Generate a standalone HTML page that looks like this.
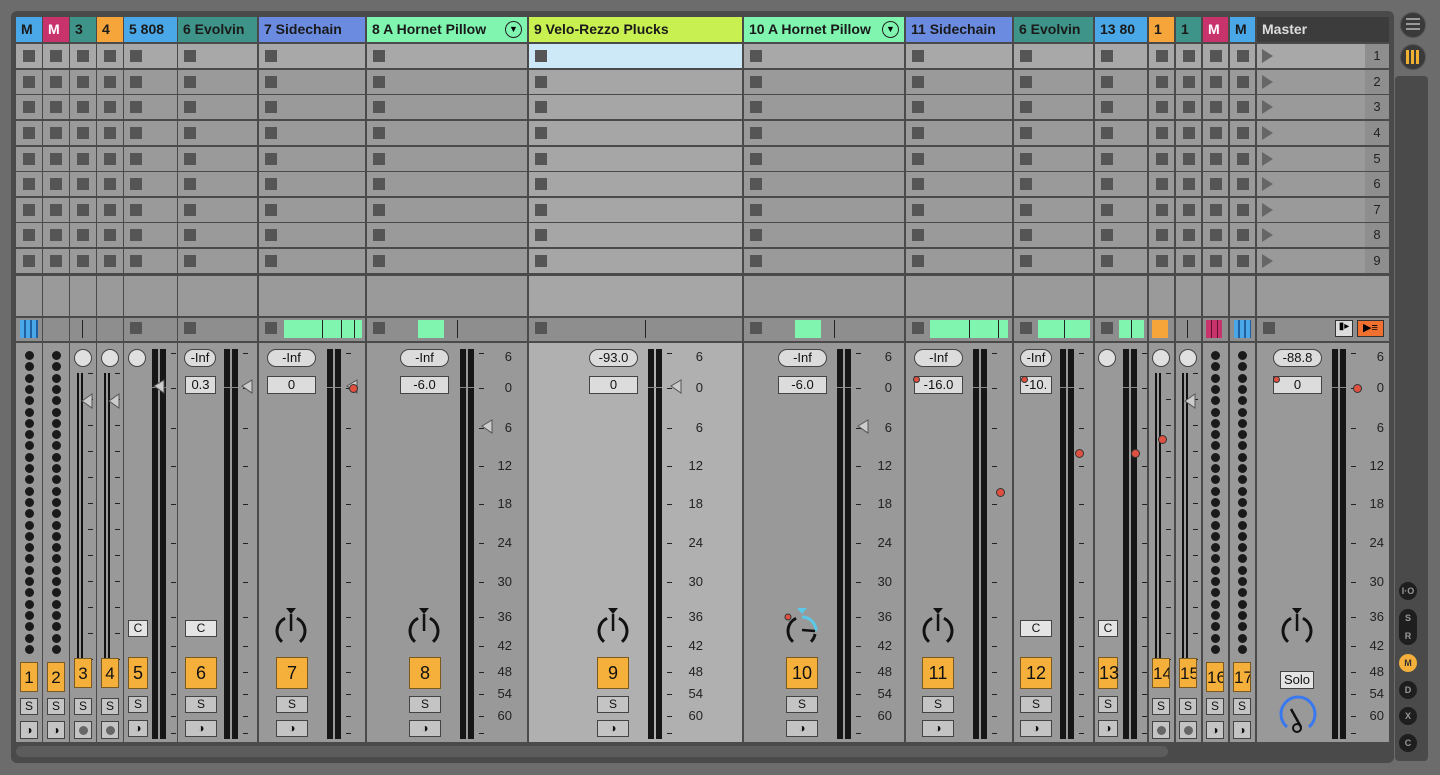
<!DOCTYPE html>
<html><head><meta charset="utf-8"><style>
*{box-sizing:border-box;margin:0;padding:0}
body{width:1440px;height:775px;background:#6c6c6c;position:relative;overflow:hidden;font-family:"Liberation Sans",sans-serif;}
.a{position:absolute}
.hd{position:absolute;top:17px;height:25px;font-size:14px;line-height:25px;padding-left:5px;white-space:nowrap;overflow:hidden;color:#1a1a1a;font-weight:bold}
.sq{position:absolute;width:12px;height:12px;background:#555}
.pill{position:absolute;height:18px;border:1px solid #444;border-radius:9px;background:#dcdcdc;font-size:13px;line-height:16px;text-align:center;color:#111}
.box{position:absolute;height:18px;border:1px solid #444;background:#dcdcdc;font-size:13px;line-height:16px;text-align:center;color:#111}
.num{position:absolute;background:#f5b03c;border:1px solid #7a5a20;font-size:18px;text-align:center;color:#111}
.btn{position:absolute;border:1px solid #444;background:#c4c4c4;font-size:12px;text-align:center;color:#111}
.mt{position:absolute;top:349px;height:390px;background:#161616}
.tk{position:absolute;width:5px;height:1px;background:#222}
.lb{position:absolute;font-size:13px;color:#222;width:24px;text-align:right}
.dot{position:absolute;width:9px;height:9px;border-radius:50%;background:#1a1a1a}
.cir{position:absolute;width:18px;height:18px;border-radius:50%;background:#e0e0e0;border:1px solid #444}
.rb{position:absolute;left:1399px;width:18px;height:18px;border-radius:50%;background:#1e1e1e;color:#999;font-size:9px;text-align:center;line-height:18px;font-weight:bold}
</style></head><body>
<div class="a" style="left:11px;top:11px;width:1383px;height:752px;background:#4a4a4a;border-radius:6px"></div>
<div class="a" style="left:1395px;top:76px;width:33px;height:685px;background:#4a4a4a;border-radius:4px"></div>
<div class="a" style="left:1400px;top:12px;width:26px;height:26px;border-radius:50%;background:#3a3a3a;border:1px solid #555"></div>
<div class="a" style="left:1406px;top:18px;width:14px;height:2px;background:#999;box-shadow:0 5px 0 #999,0 10px 0 #999"></div>
<div class="a" style="left:1400px;top:44px;width:26px;height:26px;border-radius:50%;background:#3a3a3a;border:1px solid #555"></div>
<div class="a" style="left:1406px;top:50px;width:3px;height:14px;background:#f0b030;box-shadow:5px 0 0 #f0b030,10px 0 0 #f0b030"></div>
<div class="rb" style="top:582px">I·O</div>
<div class="rb" style="top:609px;border-radius:9px 9px 0 0">S</div>
<div class="rb" style="top:627px;border-radius:0 0 9px 9px">R</div>
<div class="rb" style="top:654px;background:#f5b03c;color:#333">M</div>
<div class="rb" style="top:681px">D</div>
<div class="rb" style="top:707px">X</div>
<div class="rb" style="top:734px">C</div>
<div class="a" style="left:16px;top:746px;width:1152px;height:11px;border-radius:6px;background:#5c5c5c"></div>
<div id="root"></div>

<div class="hd" style="left:16px;width:26px;background:#4aa8e8">M</div>
<div class="hd" style="left:43px;width:26px;background:#c8336c;color:#fff">M</div>
<div class="hd" style="left:70px;width:26px;background:#3e9488">3</div>
<div class="hd" style="left:97px;width:26px;background:#f5a53a">4</div>
<div class="hd" style="left:124px;width:53px;background:#4aa8e8">5 808</div>
<div class="hd" style="left:178px;width:79px;background:#3e9488">6 Evolvin</div>
<div class="hd" style="left:259px;width:106px;background:#6b8be0">7 Sidechain</div>
<div class="hd" style="left:367px;width:160px;background:#7ff5b0">8 A Hornet Pillow</div>
<div class="hd" style="left:529px;width:213px;background:#c8f050">9 Velo-Rezzo Plucks</div>
<div class="hd" style="left:744px;width:160px;background:#7ff5b0">10 A Hornet Pillow</div>
<div class="hd" style="left:906px;width:106px;background:#6b8be0">11 Sidechain</div>
<div class="hd" style="left:1014px;width:79px;background:#3e9488">6 Evolvin</div>
<div class="hd" style="left:1095px;width:52px;background:#4aa8e8">13 80</div>
<div class="hd" style="left:1149px;width:25px;background:#f5a53a">1</div>
<div class="hd" style="left:1176px;width:25px;background:#3e9488">1</div>
<div class="hd" style="left:1203px;width:25px;background:#c8336c;color:#fff">M</div>
<div class="hd" style="left:1230px;width:25px;background:#4aa8e8">M</div>
<div class="hd" style="left:1257px;width:132px;background:#3c3c3c;color:#ddd">Master</div>
<div class="a" style="left:505px;top:21px;width:17px;height:17px;border:1.5px solid #222;border-radius:50%;font-size:9px;text-align:center;line-height:15px">▼</div>
<div class="a" style="left:882px;top:21px;width:17px;height:17px;border:1.5px solid #222;border-radius:50%;font-size:9px;text-align:center;line-height:15px">▼</div>

<script>
const C=[[16,26,'dots'],[43,26,'dots'],[70,26,'thin'],[97,26,'thin'],[124,53,'c5'],[178,79,'c6'],[259,106,'w7'],[367,160,'w8'],[529,213,'w9'],[744,160,'w10'],[906,106,'w11'],[1014,79,'c12'],[1095,52,'c13'],[1149,25,'thin'],[1176,25,'thin'],[1203,25,'dots'],[1230,25,'dots'],[1257,132,'m']];
let h='';
const rowsY=[44,70,95,121,147,172,198,223,249];
const ticks=[353,388,428,466,504,543,582,617,646,672,694,716,733];
C.forEach((c,i)=>{
 const [x,w,t]=c;const sel=t=='w9';
 rowsY.forEach((y,r)=>{
  let bg=r==0?'#a8a8a8':'#9a9a9a'; if(sel&&r==0)bg='#cde9f8'; if(sel&&r>0)bg='#a6a6a6';
  h+=`<div class="a" style="left:${x}px;top:${y}px;width:${w}px;height:24px;background:${bg}"></div>`;
  if(t=='m'){h+=`<div class="a" style="left:${x+5}px;top:${y+5}px;width:0;height:0;border-left:11px solid #666;border-top:7px solid transparent;border-bottom:7px solid transparent"></div><div class="a" style="left:${x+108}px;top:${y}px;width:24px;height:24px;background:#8e8e8e;font-size:13px;text-align:center;line-height:24px;color:#222">${r+1}</div>`;}
  else h+=`<div class="sq" style="left:${x+(w<30?7:6)}px;top:${y+6}px"></div>`;
 });
 h+=`<div class="a" style="left:${x}px;top:276px;width:${w}px;height:40px;background:${sel?'#a6a6a6':'#9a9a9a'}"></div>`;
 h+=`<div class="a" style="left:${x}px;top:318px;width:${w}px;height:23px;background:#8e8e8e"></div>`;
 h+=`<div class="a" style="left:${x}px;top:343px;width:${w}px;height:399px;background:${sel?'#b0b0b0':'#999'}"></div>`;
});
const st=[[130],[184],[265],[373],[535],[750],[912],[1020],[1101],[1263]];
st.forEach(s=>h+=`<div class="sq" style="left:${s[0]}px;top:322px"></div>`);
[[284,78],[418,26],[795,26],[930,78],[1038,52],[1119,25]].forEach(g=>h+=`<div class="a" style="left:${g[0]}px;top:320px;width:${g[1]}px;height:18px;background:#7ff5b0"></div>`);
[[322],[341],[354],[457],[645],[834],[969],[998],[1064],[1131],[1187],[1160]].forEach(v=>h+=`<div class="a" style="left:${v[0]}px;top:320px;width:1px;height:18px;background:#222"></div>`);
h+=`<div class="a" style="left:20px;top:320px;width:18px;height:18px;background:repeating-linear-gradient(90deg,#4aa8e8 0 4px,#2060a0 4px 6px)"></div>`;
h+=`<div class="a" style="left:1234px;top:320px;width:17px;height:18px;background:repeating-linear-gradient(90deg,#4aa8e8 0 4px,#2060a0 4px 6px)"></div>`;
h+=`<div class="a" style="left:1206px;top:320px;width:16px;height:18px;background:repeating-linear-gradient(90deg,#c8336c 0 5px,#601030 5px 6px)"></div>`;
h+=`<div class="a" style="left:1152px;top:320px;width:16px;height:18px;background:#f5a53a"></div><div class="a" style="left:82px;top:320px;width:1px;height:18px;background:#222"></div>`;
h+=`<div class="a" style="left:1335px;top:320px;width:18px;height:17px;border:1px solid #333;background:#ddd;font-size:10px;text-align:center">▮▸</div><div class="a" style="left:1357px;top:320px;width:27px;height:17px;border:1px solid #333;background:#f07030;font-size:11px;text-align:center;line-height:15px">▶≡</div>`;
function meter(x,scale,lbx){h+=`<div class="mt" style="left:${x}px;width:6px"></div><div class="mt" style="left:${x+8}px;width:6px"></div><div class="a" style="left:${x}px;top:387px;width:14px;height:1px;background:#888"></div>`;
 ticks.forEach(y=>h+=`<div class="tk" style="left:${x+19}px;top:${y}px"></div>`);
 if(scale){const L=[['6',357],['0',388],['6',428],['12',466],['18',504],['24',543],['30',582],['36',617],['42',646],['48',672],['54',694],['60',716]];L.forEach(l=>h+=`<div class="lb" style="left:${lbx}px;top:${l[1]-8}px">${l[0]}</div>`);}}
const KR='<path d="M25.9 11.3 A14 14 0 0 1 29 34.7" fill="none" stroke="#111" stroke-width="3"/>';
const KL='<path d="M14.1 11.3 A14 14 0 0 0 11 34.7" fill="none" stroke="#111" stroke-width="3"/>';
function knob(cx){h+=`<svg class="a" style="left:${cx-20}px;top:607px" width="40" height="42">${KL}${KR}<rect x="18.8" y="7" width="2.5" height="17" fill="#111"/><path d="M15 1 L25 1 L20 7Z" fill="#111"/></svg>`;}
function bottom(cx,n,wid){h+=`<div class="num" style="left:${cx-wid/2}px;top:657px;width:${wid}px;height:32px;line-height:30px">${n}</div><div class="btn" style="left:${cx-wid/2}px;top:696px;width:${wid}px;height:17px;line-height:15px">S</div><div class="btn" style="left:${cx-wid/2}px;top:720px;width:${wid}px;height:17px;line-height:15px">◑</div>`;}
[[29,1,'dots'],[56,2,'dots'],[83,3,'thin'],[110,4,'thin'],[1161,14,'thin'],[1188,15,'thin'],[1215,16,'dots'],[1242,17,'dots']].forEach(d=>{
 const [cx,n,t]=d;
 if(t=='dots'){for(let y=351;y<655;y+=11.3)h+=`<div class="dot" style="left:${cx-4}px;top:${y}px"></div>`;}
 else{h+=`<div class="cir" style="left:${cx-9}px;top:349px"></div><div class="a" style="left:${cx-6}px;top:373px;width:2px;height:290px;background:#111"></div><div class="a" style="left:${cx-2}px;top:373px;width:2px;height:290px;background:#111"></div>`;
  for(let y=373;y<660;y+=26)h+=`<div class="tk" style="left:${cx+5}px;top:${y}px"></div>`;}
 h+=`<div class="num" style="left:${cx-9}px;top:${t=='dots'?662:658}px;width:18px;height:30px;line-height:30px;font-size:17px;overflow:hidden">${n}</div><div class="btn" style="left:${cx-9}px;top:698px;width:18px;height:17px;line-height:15px">S</div><div class="btn" style="left:${cx-9}px;top:721px;width:18px;height:18px;line-height:16px">${t=='thin'?'<span style="display:inline-block;width:9px;height:9px;border-radius:50%;background:#666;vertical-align:middle"></span>':'◑'}</div>`;
});
h+=`<svg class="a" style="left:74px;top:392px" width="50" height="20"><path d="M18 2 L8 9 L18 16Z" fill="#ccc" stroke="#555"/><path d="M45 2 L35 9 L45 16Z" fill="#ccc" stroke="#555"/></svg>`;
h+=`<svg class="a" style="left:1177px;top:392px" width="20" height="20"><path d="M18 2 L8 9 L18 16Z" fill="#ccc" stroke="#555"/></svg>`;
h+=`<div class="cir" style="left:128px;top:349px"></div>`;meter(152,false);
h+=`<div class="btn" style="left:128px;top:620px;width:20px;height:17px;background:#e4e4e4;line-height:15px">C</div>`;bottom(138,5,20);
h+=`<div class="pill" style="left:184px;top:349px;width:32px">-Inf</div><div class="box" style="left:185px;top:376px;width:31px">0.3</div>`;meter(224,false);
h+=`<div class="btn" style="left:185px;top:620px;width:32px;height:17px;background:#e4e4e4;line-height:15px">C</div>`;bottom(201,6,32);
h+=`<div class="pill" style="left:267px;top:349px;width:49px">-Inf</div><div class="box" style="left:267px;top:376px;width:49px">0</div>`;meter(327,false);knob(291);bottom(292,7,32);
h+=`<div class="pill" style="left:400px;top:349px;width:49px">-Inf</div><div class="box" style="left:400px;top:376px;width:49px">-6.0</div>`;meter(460,true,488);knob(424);bottom(425,8,32);
h+=`<div class="pill" style="left:589px;top:349px;width:49px">-93.0</div><div class="box" style="left:589px;top:376px;width:49px">0</div>`;meter(648,true,679);knob(613);bottom(613,9,32);
h+=`<div class="pill" style="left:778px;top:349px;width:49px">-Inf</div><div class="box" style="left:778px;top:376px;width:49px">-6.0</div>`;meter(837,true,868);
h+=`<svg class="a" style="left:782px;top:607px" width="44" height="42">${KL}<path d="M20 10 A14 14 0 0 1 34 24" fill="none" stroke="#5cc8e8" stroke-width="3"/><path d="M33 27 A14 14 0 0 1 29 34.7" fill="none" stroke="#111" stroke-width="3"/><line x1="20" y1="23" x2="33" y2="24" stroke="#111" stroke-width="2.5"/><path d="M15 1 L25 1 L20 7Z" fill="#5cc8e8"/><circle cx="6" cy="10" r="3" fill="#e05040" stroke="#333"/></svg>`;bottom(802,10,32);
h+=`<div class="pill" style="left:914px;top:349px;width:49px">-Inf</div><div class="box" style="left:914px;top:376px;width:49px">-16.0</div>`;meter(973,false);knob(938);bottom(938,11,32);
h+=`<div class="pill" style="left:1020px;top:349px;width:32px">-Inf</div><div class="box" style="left:1020px;top:376px;width:32px">-10.</div>`;meter(1060,false);
h+=`<div class="btn" style="left:1020px;top:620px;width:32px;height:17px;background:#e4e4e4;line-height:15px">C</div>`;bottom(1036,12,32);
h+=`<div class="cir" style="left:1098px;top:349px"></div>`;meter(1123,false);
h+=`<div class="btn" style="left:1098px;top:620px;width:20px;height:17px;background:#e4e4e4;line-height:15px">C</div>`;bottom(1108,13,20);
h+=`<div class="pill" style="left:1273px;top:349px;width:49px">-88.8</div><div class="box" style="left:1273px;top:376px;width:49px">0</div>`;meter(1332,true,1360);knob(1297);
h+=`<div class="btn" style="left:1280px;top:671px;width:34px;height:18px;background:#e4e4e4;font-size:13px;line-height:16px">Solo</div>`;
h+=`<svg class="a" style="left:1277px;top:695px" width="42" height="42"><path d="M10 32 A17 17 0 1 1 32 32" fill="none" stroke="#3a78f0" stroke-width="3"/><line x1="14" y1="14" x2="24" y2="32" stroke="#111" stroke-width="2.5"/><circle cx="20" cy="33" r="4" fill="none" stroke="#111" stroke-width="2"/></svg>`;
[[152,386],[240,386],[345,386],[480,426],[669,386],[856,426]].forEach(p=>h+=`<svg class="a" style="left:${p[0]}px;top:${p[1]-7}px" width="14" height="15"><path d="M12 1 L2 7 L12 14Z" fill="#ccc" stroke="#555"/></svg>`);
[[349,388],[996,492],[1075,453],[1131,453],[1158,439],[1353,388]].forEach(p=>h+=`<div class="a" style="left:${p[0]}px;top:${p[1]-4}px;width:9px;height:9px;border-radius:50%;background:#e05040;border:1px solid #333"></div>`);
[[913,376],[1021,376],[1273,376]].forEach(p=>h+=`<div class="a" style="left:${p[0]}px;top:${p[1]}px;width:7px;height:7px;border-radius:50%;background:#e05040;border:1px solid #333"></div>`);
document.getElementById('root').innerHTML=h;
</script>
</body></html>
